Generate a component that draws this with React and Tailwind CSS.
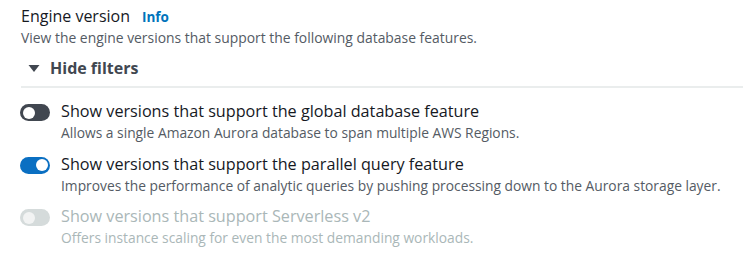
const filters = [
  {
    label: 'Show versions that support the global database feature',
    desc: 'Allows a single Amazon Aurora database to span multiple AWS Regions.',
    checked: false,
  },
  {
    label: 'Show versions that support the parallel query feature',
    desc: 'Improves the performance of analytic queries by pushing processing down to the Aurora storage layer.',
    checked: true,
  },
  {
    label: 'Show versions that support Serverless v2',
    desc: 'Offers instance scaling for even the most demanding workloads.',
    checked: false,
    disabled: true,
  },
];

function Toggle({ checked, disabled }) {
  const track = disabled ? 'bg-[#d5dbdb]' : checked ? 'bg-[#0a6fc2]' : 'bg-[#414750]';
  return (
    <span className={`relative inline-flex h-[17px] w-[30px] shrink-0 items-center rounded-full ${track}`}>
      <span
        className={`absolute top-[2.5px] h-[12px] w-[12px] rounded-full ${disabled ? 'bg-[#f2f3f3]' : 'bg-white'} ${
          checked ? 'left-[15.5px]' : 'left-[2.5px]'
        }`}
      />
    </span>
  );
}

export default function App() {
  return (
    <div className="h-[274px] w-[743px] bg-white pl-[21px] pt-[5px] font-['Open_Sans',sans-serif]">
      {/* Header */}
      <div className="flex items-baseline gap-[12px]">
        <h2 className="text-[16px] leading-[22px] text-[#16191f]">Engine version</h2>
        <a className="text-[13.5px] font-bold text-[#0073bb]">Info</a>
      </div>
      <p className="text-[13.9px] leading-[22px] text-[#545b64]">
        View the engine versions that support the following database features.
      </p>

      {/* Expandable filters */}
      <div className="mt-[8px] flex items-center gap-[10px] pb-[7px] pl-[7px] text-[16px] font-bold leading-[22px] text-[#414750]">
        <svg width="12" height="9" viewBox="0 0 12 9">
          <path d="M0.5 1h11L6 8z" fill="#414750" />
        </svg>
        Hide filters
      </div>
      <div className="h-[2px] bg-[#eaeded]" />

      <div className="mt-[12px] flex flex-col gap-[8.5px]">
        {filters.map((f) => (
          <div key={f.label} className="-ml-[1px] flex items-start gap-[11px]">
            <div className="pt-[3px]">
              <Toggle checked={f.checked} disabled={f.disabled} />
            </div>
            <div>
              <div
                className={`text-[16.2px] leading-[22px] ${f.disabled ? 'text-[#aab7b8]' : 'text-[#16191f]'}`}
              >
                {f.label}
              </div>
              <div
                className={`text-[13.8px] leading-[22px] ${f.disabled ? 'text-[#aab7b8]' : 'text-[#545b64]'}`}
              >
                {f.desc}
              </div>
            </div>
          </div>
        ))}
      </div>
    </div>
  );
}
